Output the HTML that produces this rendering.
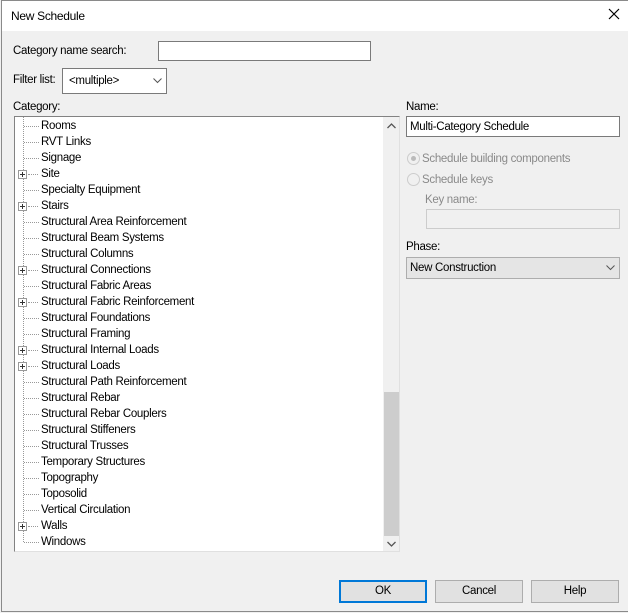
<!DOCTYPE html>
<html><head><style>
*{margin:0;padding:0;box-sizing:border-box}
body{width:628px;height:613px;background:#f0f0f0;font-family:"Liberation Sans",Arial,sans-serif;font-size:11.5px;letter-spacing:-0.3px;color:#000;position:relative;overflow:hidden}
.abs{position:absolute}
#frame{left:1px;top:0;width:627px;height:612px;border:1px solid #8a8a8a;border-right:none}
#title{left:2px;top:1px;width:626px;height:30px;background:#fff}
.t{position:absolute;white-space:nowrap;line-height:14px}
.box{position:absolute;background:#fff;border:1px solid #7a7a7a}
.item{position:absolute;left:41px;white-space:nowrap;line-height:14px}
.h{position:absolute;left:29px;width:10px;border-top:1px dotted #999}
.plus{position:absolute;left:18px;width:9px;height:9px;border:1px solid #999;background:#fff}
.plus:before{content:"";position:absolute;left:1px;top:3px;width:5px;height:1px;background:#333}
.plus:after{content:"";position:absolute;left:3px;top:1px;width:1px;height:5px;background:#333}
.btn{position:absolute;top:580px;height:23px;width:88px;background:#e1e1e1;border:1px solid #adadad;text-align:center;line-height:21px}
</style></head><body>
<div id="frame" class="abs"></div>
<div id="title" class="abs"></div>
<div class="t" style="left:11px;top:9px;font-size:12px">New Schedule</div>
<svg class="abs" style="left:608px;top:8px" width="12" height="12"><path d="M1 1L11 11M11 1L1 11" stroke="#000" stroke-width="1.2"/></svg>

<div class="t" style="left:13px;top:44px">Category name search:</div>
<div class="box" style="left:158px;top:41px;width:213px;height:20px;border-color:#7a7a7a"></div>
<div class="t" style="left:13px;top:73px">Filter list:</div>
<div class="box" style="left:62px;top:68px;width:105px;height:26px"></div>
<div class="t" style="left:69px;top:74px">&lt;multiple&gt;</div>
<svg class="abs" style="left:153px;top:78px" width="9" height="6"><path d="M0.5 0.5L4.5 4.5L8.5 0.5" stroke="#555" fill="none"/></svg>
<div class="t" style="left:13px;top:100px">Category:</div>

<div class="box" style="left:14px;top:116px;width:386px;height:436px;border-color:#828282;border-right-color:#e0e0e0;border-bottom-color:#e0e0e0"></div>
<div class="abs" style="left:383px;top:117px;width:16px;height:434px;background:#f0f0f0"></div>
<div class="abs" style="left:384px;top:392px;width:15px;height:144px;background:#cdcdcd"></div>
<svg class="abs" style="left:387px;top:123px" width="9" height="6"><path d="M0.5 5L4.5 1L8.5 5" stroke="#555" fill="none" stroke-width="1.3"/></svg>
<svg class="abs" style="left:387px;top:541px" width="9" height="6"><path d="M0.5 1L4.5 5L8.5 1" stroke="#555" fill="none" stroke-width="1.3"/></svg>
<div class="abs" style="left:23px;top:117px;height:425px;border-left:1px dotted #999"></div>

<div id="tree"></div>
<script>
var items=[["Rooms",0],["RVT Links",0],["Signage",0],["Site",1],["Specialty Equipment",0],["Stairs",1],["Structural Area Reinforcement",0],["Structural Beam Systems",0],["Structural Columns",0],["Structural Connections",1],["Structural Fabric Areas",0],["Structural Fabric Reinforcement",1],["Structural Foundations",0],["Structural Framing",0],["Structural Internal Loads",1],["Structural Loads",1],["Structural Path Reinforcement",0],["Structural Rebar",0],["Structural Rebar Couplers",0],["Structural Stiffeners",0],["Structural Trusses",0],["Temporary Structures",0],["Topography",0],["Toposolid",0],["Vertical Circulation",0],["Walls",1],["Windows",0]];
var h="";items.forEach(function(it,i){var y=119+i*16;h+='<div class="item" style="top:'+y+'px">'+it[0]+'</div><div class="h" style="top:'+(y+7)+'px'+(it[1]?';left:28px':';left:24px;width:15px')+'"></div>';if(it[1])h+='<div class="plus" style="top:'+(y+3)+'px"></div>';});
document.getElementById("tree").innerHTML=h;
</script>

<div class="t" style="left:406px;top:100px">Name:</div>
<div class="box" style="left:406px;top:116px;width:214px;height:21px"></div>
<div class="t" style="left:410px;top:120px">Multi-Category Schedule</div>
<div class="abs" style="left:407px;top:152px;width:13px;height:13px;border-radius:50%;border:1px solid #ccc;background:#f0f0f0"></div>
<div class="abs" style="left:411px;top:156px;width:5px;height:5px;border-radius:50%;background:#bbb"></div>
<div class="t" style="left:422px;top:152px;color:#8a8a8a">Schedule building components</div>
<div class="abs" style="left:407px;top:173px;width:13px;height:13px;border-radius:50%;border:1px solid #ccc;background:#f0f0f0"></div>
<div class="t" style="left:422px;top:173px;color:#8a8a8a">Schedule keys</div>
<div class="t" style="left:425px;top:193px;color:#8a8a8a">Key name:</div>
<div class="abs" style="left:426px;top:209px;width:194px;height:20px;border:1px solid #ccc;background:#f0f0f0"></div>
<div class="t" style="left:406px;top:240px">Phase:</div>
<div class="abs" style="left:406px;top:257px;width:214px;height:22px;border:1px solid #adadad;background:#e5e5e5"></div>
<div class="t" style="left:410px;top:261px">New Construction</div>
<svg class="abs" style="left:606px;top:265px" width="9" height="6"><path d="M0.5 0.5L4.5 4.5L8.5 0.5" stroke="#555" fill="none"/></svg>

<div class="btn" style="left:339px;border:2px solid #0078d7;line-height:19px">OK</div>
<div class="btn" style="left:435px">Cancel</div>
<div class="btn" style="left:531px">Help</div>
</body></html>
